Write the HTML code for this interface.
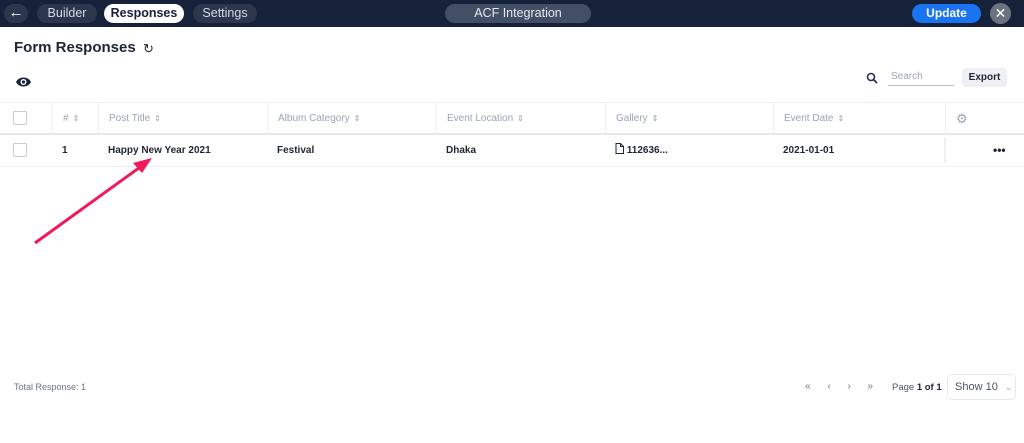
<!DOCTYPE html>
<html><head><meta charset="utf-8"><style>
*{box-sizing:border-box;margin:0;padding:0}
body{width:1024px;height:443px;background:#fff;font-family:"Liberation Sans",sans-serif;position:relative;overflow:hidden;color:#1e2533}
.top{position:absolute;left:0;top:0;width:1024px;height:27px;background:#16213a}
.pill{position:absolute;top:4px;height:19px;border-radius:10px;background:#2c374d;color:#d5dbe6;font-size:12.5px;line-height:19px;text-align:center}
.abs{position:absolute}
.th{position:absolute;top:103px;height:32px;line-height:32px;font-size:10px;color:#9aa3b5;border-left:1px solid #eef0f3;padding-left:10px}
.td{position:absolute;top:136px;height:30px;line-height:30px;font-size:10px;font-weight:bold;color:#1e2533;padding-left:10px}
.sort{font-size:8px;color:#9aa3b5;margin-left:4px}
.cb{position:absolute;width:14px;height:14px;border:1px solid #c6cbd4;border-radius:2px;background:#fff}
</style></head><body>
<div class="top"></div>
<div class="pill" style="left:4px;width:24px;color:#fff;font-size:15px;line-height:18px">&#8592;</div>
<div class="pill" style="left:37px;width:60px">Builder</div>
<div class="pill" style="left:104px;width:80px;background:#fff;color:#16213a;font-weight:bold">Responses</div>
<div class="pill" style="left:193px;width:64px">Settings</div>
<div class="pill" style="left:445px;width:146px;background:#434f65;color:#e6eaf0">ACF Integration</div>
<div class="pill" style="left:912px;width:69px;background:#1a73f0;color:#fff;font-weight:bold;font-size:12px">Update</div>
<div class="pill" style="left:990px;width:21px;height:21px;top:3px;border-radius:50%;background:#6d737e;color:#fff;font-size:14px;line-height:21px">&#10005;</div>

<div class="abs" style="left:14px;top:39px;font-size:15px;font-weight:bold;color:#1e2533">Form Responses</div>
<div class="abs" style="left:143px;top:41px;font-size:13px;color:#1e2533">&#8635;</div>
<svg class="abs" style="left:15px;top:76px" width="17" height="12" viewBox="0 0 17 12"><path d="M1 6C4 0 13 0 16 6C13 12 4 12 1 6Z" fill="#16213a"/><circle cx="8.5" cy="6" r="3" fill="#fff"/><circle cx="8.5" cy="6" r="1.6" fill="#16213a"/></svg>

<svg class="abs" style="left:866px;top:72px" width="12" height="12" viewBox="0 0 12 12"><circle cx="5" cy="5" r="3.5" fill="none" stroke="#243052" stroke-width="1.6"/><path d="M7.5 7.5L11 11" stroke="#243052" stroke-width="1.8"/></svg>
<div class="abs" style="left:888px;top:71px;width:66px;height:15px;border-bottom:1px solid #b8bdc6;font-size:10px;color:#9aa3b5;padding-left:3px">Search</div>
<div class="abs" style="left:962px;top:68px;width:45px;height:19px;background:#eef0f3;border-radius:4px;font-size:10px;font-weight:bold;line-height:19px;text-align:center">Export</div>

<div class="abs" style="left:0;top:102px;width:1024px;height:1px;background:#eef0f3"></div>
<div class="abs" style="left:0;top:133px;width:1024px;height:2px;background:#e6e8ec"></div>
<div class="abs" style="left:0;top:166px;width:1024px;height:1px;background:#eef0f3"></div>
<div class="cb" style="left:13px;top:111px"></div>
<div class="th" style="left:52px;width:48px">#<span class="sort">&#8661;</span></div>
<div class="th" style="left:98px">Post Title<span class="sort">&#8661;</span></div>
<div class="th" style="left:267px">Album Category<span class="sort">&#8661;</span></div>
<div class="th" style="left:436px">Event Location<span class="sort">&#8661;</span></div>
<div class="th" style="left:605px">Gallery<span class="sort">&#8661;</span></div>
<div class="th" style="left:773px">Event Date<span class="sort">&#8661;</span></div>
<div class="th" style="left:945px;font-size:13px;width:79px">&#9881;</div>

<div class="cb" style="left:13px;top:143px"></div>
<div class="td" style="left:52px">1</div>
<div class="td" style="left:98px">Happy New Year 2021</div>
<div class="td" style="left:267px">Festival</div>
<div class="td" style="left:436px">Dhaka</div>
<div class="td" style="left:605px;font-weight:normal"><svg width="9" height="11" viewBox="0 0 9 11" style="vertical-align:-1px"><path d="M1 .5H5.5L8.5 3.5V10.5H1Z M5.5 .5V3.5H8.5" fill="none" stroke="#1e2533" stroke-width="1"/></svg><b style="font-weight:bold"> 112636...</b></div>
<div class="td" style="left:773px">2021-01-01</div>
<div class="abs" style="left:944px;top:137px;width:2px;height:26px;background:#eef0f3"></div>
<div class="td" style="left:983px;font-size:12px;line-height:29px">&#8226;&#8226;&#8226;</div>

<svg class="abs" style="left:0;top:0" width="1024" height="443"><path d="M35 243L143 165" stroke="#f0195a" stroke-width="3"/><path d="M152 158L133 163L142 173Z" fill="#f0195a"/></svg>

<div class="abs" style="left:14px;top:382px;font-size:9px;color:#6b7384">Total Response: 1</div>
<div class="abs" style="left:805px;top:381px;font-size:10px;color:#6b7384;word-spacing:14px">&#171; &#8249; &#8250; &#187;</div>
<div class="abs" style="left:892px;top:382px;font-size:9.5px;color:#4a5263">Page <b style="color:#1e2533">1 of 1</b></div>
<div class="abs" style="left:947px;top:374px;width:69px;height:26px;border:1px solid #e6e8ec;border-radius:5px;font-size:11px;color:#4a5263;line-height:24px;padding-left:7px">Show 10 <span style="font-size:9px;color:#9aa3b5;margin-left:4px">&#8964;</span></div>
</body></html>
